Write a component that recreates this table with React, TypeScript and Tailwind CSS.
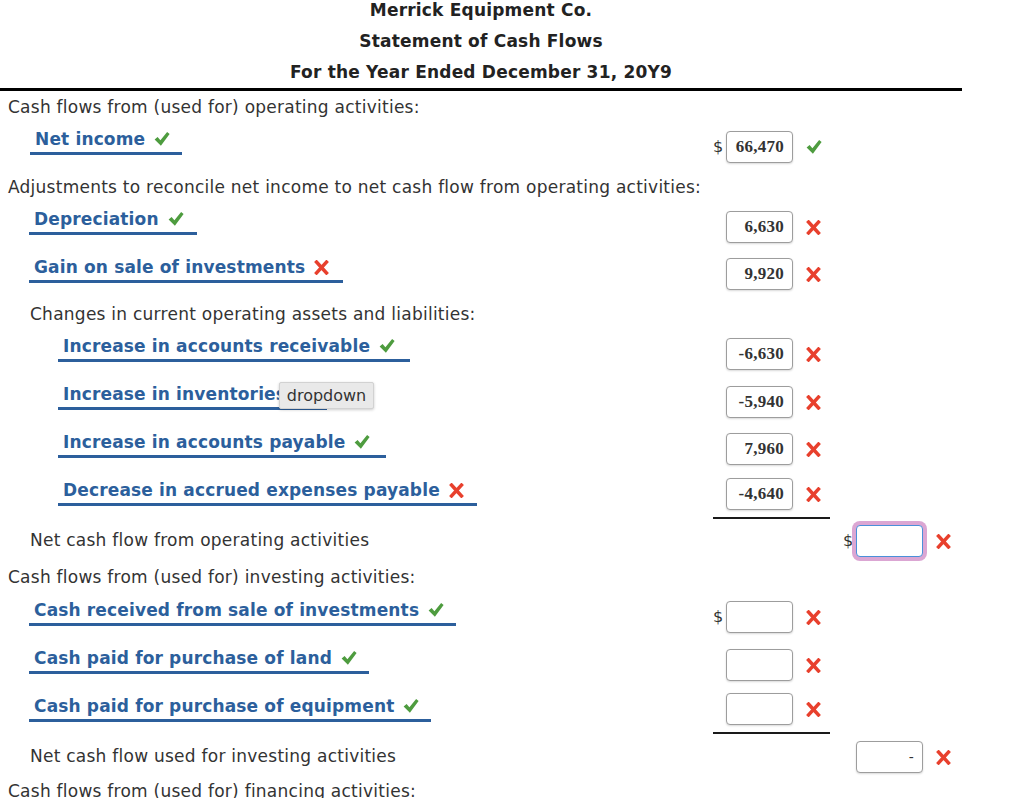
import { FunctionComponent, ReactNode } from "react";

const Check: FunctionComponent<{ className?: string }> = ({ className = "" }) => (
  <svg className={className} width="16" height="16" viewBox="0 0 16 16">
    <path d="M0.6 8.4 L3.6 6.1 L6.4 9.3 L13.1 0.9 L15.6 2.9 L6.9 14.8 Z" fill="#4e9c3f" />
  </svg>
);

const Cross: FunctionComponent<{ className?: string }> = ({ className = "" }) => (
  <svg className={className} width="15" height="15" viewBox="0 0 15 15">
    <path d="M2.5 2 L12.5 13 M12.5 2 L2.5 13" stroke="#e8402d" strokeWidth="3.4" strokeLinecap="square" />
  </svg>
);

type AmountType = {
  value?: string;
  dollar?: boolean;
  mark?: "ok" | "bad";
  focused?: boolean;
  plain?: boolean;
};

const Amount: FunctionComponent<AmountType> = ({ value = "", dollar = false, mark = "bad", focused = false, plain = false }) => (
  <div className="flex flex-row items-center">
    <span className="w-[13px] text-[16px] leading-[20px] text-[#333]">{dollar ? "$" : ""}</span>
    <div
      className={`w-[67px] h-[32px] rounded-[4px] bg-white flex items-center justify-end pr-[8px] ${
        focused
          ? "border border-[#4a90d9] ring-[4px] ring-[#dba6d3]"
          : "border border-[#9d9d9d] shadow-[0_1px_2px_rgba(0,0,0,0.15)]"
      }`}
    >
      <span
        className={
          plain
            ? "text-[14px] text-[#333] font-['DejaVu_Sans',sans-serif]"
            : "text-[17px] font-bold text-[#333] font-['Liberation_Serif',serif]"
        }
      >
        {value}
      </span>
    </div>
    <div className="w-[13px]" />
    {mark === "ok" ? <Check /> : <Cross />}
  </div>
);

type LabelType = {
  text: string;
  indent: number;
  width: number;
  mark: "ok" | "bad";
};

const Label: FunctionComponent<LabelType> = ({ text, indent, width, mark }) => (
  <div
    className="flex flex-row items-center border-b-[3px] border-[#2c5f9c] pl-[5px] pb-[1px] h-[28px] font-bold text-[17px] tracking-[0.15px] text-[#2c5f9c] whitespace-nowrap"
    style={{ marginLeft: indent, width }}
  >
    <span className="leading-[24px]">{text}</span>
    {mark === "ok" ? <Check className="ml-[9px] shrink-0" /> : <Cross className="ml-[9px] shrink-0" />}
  </div>
);

type DataRowType = LabelType & {
  h: number;
  labelTop: number;
  inputTop: number;
  value?: string;
  dollar?: boolean;
  valueMark: "ok" | "bad";
  children?: ReactNode;
};

const DataRow: FunctionComponent<DataRowType> = ({ h, labelTop, inputTop, value, dollar, valueMark, children, ...label }) => (
  <div className="relative flex flex-row items-start" style={{ height: h }}>
    <div className="w-[713px]" style={{ paddingTop: labelTop }}>
      <Label {...label} />
    </div>
    <div style={{ paddingTop: inputTop }}>
      <Amount value={value} dollar={dollar} mark={valueMark} />
    </div>
    {children}
  </div>
);

const Rule = () => (
  <div className="h-[2px] flex flex-row">
    <div className="w-[713px]" />
    <div className="w-[117px] bg-[#1a1a1a]" />
  </div>
);

const App: FunctionComponent = () => {
  return (
    <div className="h-[798px] overflow-hidden bg-white font-['DejaVu_Sans',Verdana,sans-serif] text-[#333] text-[17px] tracking-[0.25px]">
      <header className="w-[962px] flex flex-col items-center font-bold text-[17px] tracking-[0.2px] text-[#222]">
        <div className="h-[20px] leading-[20px]">Merrick Equipment Co.</div>
        <div className="mt-[5px] h-[32px] leading-[32px]">Statement of Cash Flows</div>
        <div className="h-[31px] leading-[31px]">For the Year Ended December 31, 20Y9</div>
      </header>
      <div className="w-[962px] h-[3px] bg-black" />

      <div className="h-[32px] leading-[32px] pl-[8px]">Cash flows from (used for) operating activities:</div>
      <DataRow h={48} labelTop={4} inputTop={8} text="Net income" indent={30} width={152} mark="ok" value="66,470" dollar valueMark="ok" />

      <div className="h-[32px] leading-[32px] pl-[8px]">
        Adjustments to reconcile net income to net cash flow from operating activities:
      </div>
      <DataRow h={48} labelTop={4} inputTop={8} text="Depreciation" indent={29} width={168} mark="ok" value="6,630" valueMark="bad" />
      <DataRow h={47} labelTop={4} inputTop={7} text="Gain on sale of investments" indent={29} width={314} mark="bad" value="9,920" valueMark="bad" />

      <div className="h-[32px] leading-[32px] pl-[30px]">Changes in current operating assets and liabilities:</div>
      <DataRow h={48} labelTop={4} inputTop={8} text="Increase in accounts receivable" indent={58} width={352} mark="ok" value="-6,630" valueMark="bad" />
      <DataRow h={48} labelTop={4} inputTop={8} text="Increase in inventories" indent={58} width={269} mark="ok" value="-5,940" valueMark="bad">
        <div className="absolute left-[279px] top-[4px] h-[27px] w-[95px] flex items-center justify-center bg-[#e9e9e9] border border-[#d2d2d2] rounded-[2px] shadow-[0_1px_3px_rgba(0,0,0,0.2)] text-[16px] tracking-normal text-[#333]">
          dropdown
        </div>
      </DataRow>
      <DataRow h={48} labelTop={4} inputTop={7} text="Increase in accounts payable" indent={58} width={328} mark="ok" value="7,960" valueMark="bad" />
      <DataRow h={43} labelTop={4} inputTop={4} text="Decrease in accrued expenses payable" indent={58} width={419} mark="bad" value="-4,640" valueMark="bad" />
      <Rule />

      <div className="h-[44px] flex flex-row items-center">
        <div className="w-[843px] pl-[30px]">Net cash flow from operating activities</div>
        <Amount dollar focused mark="bad" />
      </div>
      <div className="h-[28px] leading-[28px] pl-[8px]">Cash flows from (used for) investing activities:</div>
      <DataRow h={50} labelTop={7} inputTop={10} text="Cash received from sale of investments" indent={29} width={427} mark="ok" dollar valueMark="bad" />
      <DataRow h={48} labelTop={5} inputTop={8} text="Cash paid for purchase of land" indent={29} width={340} mark="ok" valueMark="bad" />
      <DataRow h={43} labelTop={5} inputTop={4} text="Cash paid for purchase of equipment" indent={29} width={402} mark="ok" valueMark="bad" />
      <Rule />

      <div className="h-[46px] flex flex-row items-center">
        <div className="w-[843px] pl-[30px]">Net cash flow used for investing activities</div>
        <Amount value="-" plain mark="bad" />
      </div>
      <div className="h-[22px] leading-[22px] pl-[8px]">Cash flows from (used for) financing activities:</div>
    </div>
  );
};

export default App;
